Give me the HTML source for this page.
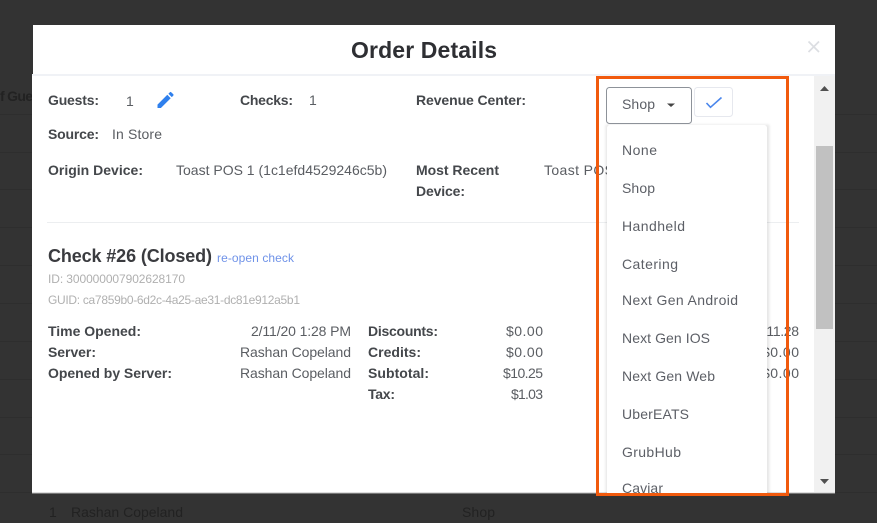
<!DOCTYPE html>
<html>
<head>
<meta charset="utf-8">
<style>
html,body{margin:0;padding:0;width:877px;height:523px;overflow:hidden;background:#333}
svg{display:block}
text{font-family:"Liberation Sans",sans-serif;font-size:14px;fill:#5a5d62}
.b{font-weight:bold;fill:#44474b}
.o{fill:#5c5f66}
</style>
</head>
<body>
<svg width="877" height="523" viewBox="0 0 877 523" xmlns="http://www.w3.org/2000/svg">
<defs>
<filter id="blur" x="-20%" y="-20%" width="140%" height="140%"><feGaussianBlur stdDeviation="1.2"/></filter>
<clipPath id="body"><rect x="32" y="75" width="782" height="418"/></clipPath>
</defs>
<rect width="877" height="523" fill="#333"/>
<g fill="#2e2e2e">
<rect y="114" width="877" height="1"/><rect y="152" width="877" height="1"/><rect y="189" width="877" height="1"/><rect y="227" width="877" height="1"/><rect y="265" width="877" height="1"/><rect y="303" width="877" height="1"/><rect y="341" width="877" height="1"/><rect y="379" width="877" height="1"/><rect y="417" width="877" height="1"/><rect y="454" width="877" height="1"/><rect y="492" width="877" height="1"/>
</g>
<text x="0" y="101" textLength="33" style="fill:#222;font-weight:bold">f Gue</text>
<text x="49" y="517" style="fill:#222">1</text>
<text x="71" y="517" textLength="112" style="fill:#222">Rashan Copeland</text>
<text x="462" y="517" textLength="33" style="fill:#222">Shop</text>

<rect x="33" y="25" width="802" height="50" fill="#fff"/>
<rect x="32" y="75" width="803" height="418" fill="#fff"/>
<rect x="32" y="74" width="803" height="2" fill="#f0f2f6"/>
<rect x="32" y="492.500" width="803" height="1" fill="#bbb"/>
<text x="351" y="58" textLength="146" style="font-size:23px;font-weight:bold;fill:#2e2f33">Order Details</text>
<path d="M808.500 41.500L819 52M819 41.500L808.500 52" stroke="#dcdee2" stroke-width="1.700" fill="none"/>

<rect x="814" y="76" width="21" height="416" fill="#f1f1f1"/>
<rect x="816" y="146" width="17" height="183" fill="#c1c1c1"/>
<path d="M820 91h9l-4.500-5z" fill="#505050"/>
<path d="M820 479h9l-4.500 5z" fill="#505050"/>

<g clip-path="url(#body)">
<text class="b" x="48" y="105" textLength="51">Guests:</text>
<text x="126" y="106">1</text>
<path d="M157.500 108v-3.400l9.800-9.800 3.400 3.400-9.800 9.800zM168.400 93.700l1.500-1.500a1 1 0 0 1 1.300 0l2.100 2.100a1 1 0 0 1 0 1.300l-1.500 1.500z" fill="#2f80ed"/>
<text class="b" x="240" y="105" textLength="53">Checks:</text>
<text x="309" y="105">1</text>
<text class="b" x="416" y="105" textLength="110">Revenue Center:</text>
<text class="b" x="48" y="139" textLength="51">Source:</text>
<text x="112" y="139" textLength="50">In Store</text>
<text class="b" x="48" y="175" textLength="95">Origin Device:</text>
<text x="176" y="175" textLength="211">Toast POS 1 (1c1efd4529246c5b)</text>
<text class="b" x="416" y="175" textLength="83">Most Recent</text>
<text class="b" x="416" y="196" textLength="49">Device:</text>
<text x="544" y="175" textLength="70">Toast POS</text>
<rect x="47" y="222" width="752" height="1" fill="#eceef0"/>

<text x="48" y="262" textLength="164" style="font-size:18px;font-weight:bold;fill:#3a3b3f">Check #26 (Closed)</text>
<text x="217" y="262" textLength="77" style="font-size:12px;fill:#6f92e8">re-open check</text>
<text x="48" y="283" textLength="137" style="font-size:12px;fill:#b0b0b0">ID: 300000007902628170</text>
<text x="48" y="304" textLength="252" style="font-size:12px;fill:#b0b0b0">GUID: ca7859b0-6d2c-4a25-ae31-dc81e912a5b1</text>

<text class="b" x="48" y="336" textLength="93">Time Opened:</text>
<text class="b" x="48" y="357" textLength="48">Server:</text>
<text class="b" x="48" y="378" textLength="124">Opened by Server:</text>
<text x="251" y="336" textLength="100">2/11/20 1:28 PM</text>
<text x="240" y="357" textLength="111">Rashan Copeland</text>
<text x="240" y="378" textLength="111">Rashan Copeland</text>
<text class="b" x="368" y="336" textLength="70">Discounts:</text>
<text class="b" x="368" y="357" textLength="53">Credits:</text>
<text class="b" x="368" y="378" textLength="61">Subtotal:</text>
<text class="b" x="368" y="399" textLength="27">Tax:</text>
<text x="506" y="336" textLength="37">$0.00</text>
<text x="506" y="357" textLength="37">$0.00</text>
<text x="503" y="378" textLength="40">$10.25</text>
<text x="511" y="399" textLength="32">$1.03</text>
<text x="759" y="336" textLength="40">$11.28</text>
<text x="762" y="357" textLength="37">$0.00</text>
<text x="762" y="378" textLength="37">$0.00</text>

<rect x="605.500" y="124.500" width="164" height="400" fill="#000" opacity=".09" filter="url(#blur)"/>
<rect x="607" y="125" width="160" height="400" rx="3" fill="#fff"/>
<text class="o" x="622" y="155" textLength="35">None</text>
<text class="o" x="622" y="193" textLength="33">Shop</text>
<text class="o" x="622" y="231" textLength="63">Handheld</text>
<text class="o" x="622" y="269" textLength="56">Catering</text>
<text class="o" x="622" y="305" textLength="116">Next Gen Android</text>
<text class="o" x="622" y="343" textLength="88">Next Gen IOS</text>
<text class="o" x="622" y="381" textLength="93">Next Gen Web</text>
<text class="o" x="622" y="419" textLength="67">UberEATS</text>
<text class="o" x="622" y="457" textLength="59">GrubHub</text>
<text class="o" x="622" y="493" textLength="41">Caviar</text>

<rect x="606.500" y="87.500" width="85" height="36" rx="3" fill="#fff" stroke="#8d9299"/>
<text class="o" x="622" y="109" textLength="33">Shop</text>
<path d="M667 103.500h8l-4 3.500z" fill="#444"/>
<rect x="694.500" y="87.500" width="38" height="29" rx="3" fill="#fff" stroke="#e6e8ee"/>
<path d="M706.500 103l4 4.300L721.500 97.500" stroke="#4a86ec" stroke-width="1.600" fill="none"/>
</g>

<rect x="597.500" y="77.500" width="190" height="417" fill="none" stroke="#f15a0d" stroke-width="3"/>
</svg>
</body>
</html>
